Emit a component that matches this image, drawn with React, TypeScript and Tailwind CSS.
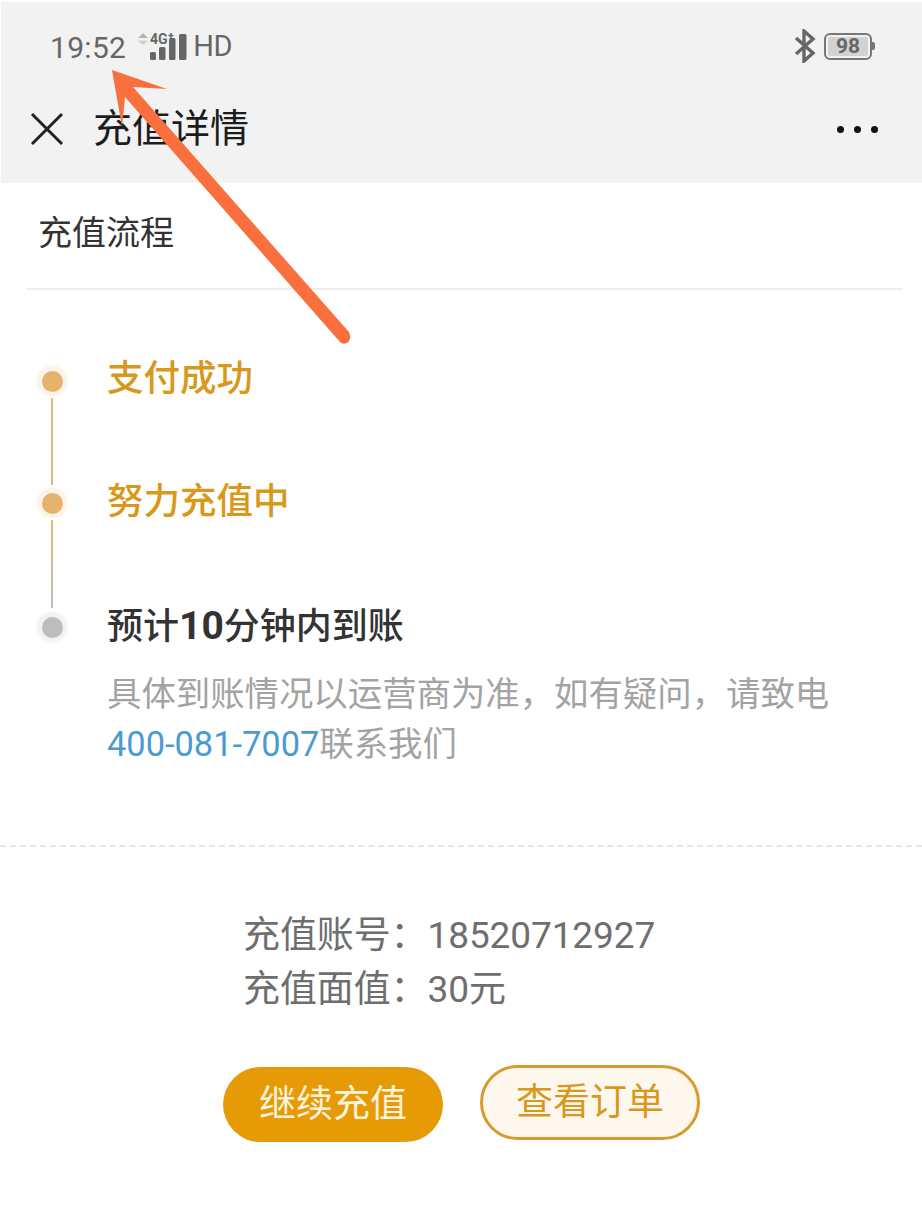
const sans = "font-['Roboto','Noto_Sans_CJK_SC',sans-serif]";

function Signal() {
  return (
    <svg width="60" height="32" viewBox="0 0 60 32" className="ml-[10px]">
      <path d="M2 7 L7 2 L12 7 Z" fill="#b4b4b4" />
      <path d="M2 9.5 L7 14 L12 9.5 Z" fill="#cfcfcf" />
      <g fill="#666">
        <rect x="14" y="21" width="6" height="8" rx="1.5" />
        <rect x="23" y="16" width="6.5" height="13" rx="1.5" />
        <rect x="33" y="7" width="6.5" height="22" rx="1.5" />
        <rect x="43" y="3" width="7.5" height="26" rx="1.5" />
      </g>
      <text x="14" y="12.5" fontSize="14" fontWeight="700" fill="#666" fontFamily="Roboto, sans-serif">4G</text>
      <path d="M35 2 v5 M32.5 4.5 h5" stroke="#666" strokeWidth="1.6" />
    </svg>
  );
}

export default function App() {
  return (
    <div className={`relative min-h-[1207px] w-[922px] overflow-hidden bg-white ${sans}`}>
      {/* header */}
      <header className="ml-px mt-[2px] h-[181px] bg-[#f2f2f2]">
        <div className="flex h-[88px] items-center justify-between pl-[49px] pr-[47px] pt-[2px]">
          <div className="flex items-center">
            <span className="text-[30px] font-normal tracking-[0.3px] text-[#666]">19:52</span>
            <Signal />
            <span className="-ml-[3px] text-[29px] font-normal tracking-[-0.5px] text-[#666]">HD</span>
          </div>
          <div className="-mt-[2px] flex items-center gap-[7px]">
            <svg width="24" height="34" viewBox="0 0 24 34" fill="none" stroke="#666" strokeWidth="3.4">
              <path d="M3 9 L20 24 L11 32 V2 L20 10 L3 25" />
            </svg>
            <div className="flex items-center">
              <div className="flex h-[27px] w-[48px] items-center justify-center rounded-[6px] border-[2.5px] border-[#777] p-[2px]">
                <div className="flex h-full w-full items-center justify-center rounded-[2px] bg-[#d2d2d2] text-[21px] font-bold leading-none text-[#666]">
                  98
                </div>
              </div>
              <div className="h-[8px] w-[3px] rounded-r-[2px] bg-[#777]" />
            </div>
          </div>
        </div>
        <div className="flex h-[78px] items-center justify-between pl-[29px] pr-[44px]">
          <div className="flex items-center gap-[29px]">
            <svg width="34" height="34" viewBox="0 0 34 34" stroke="#222" strokeWidth="3">
              <path d="M2 2 L32 32 M32 2 L2 32" />
            </svg>
            <h1 className="text-[39px] font-normal leading-none text-[#1c1c1c]">充值详情</h1>
          </div>
          <div className="flex items-center gap-[10px]">
            <span className="h-[7px] w-[7px] rounded-full bg-[#111]" />
            <span className="h-[7px] w-[7px] rounded-full bg-[#111]" />
            <span className="h-[7px] w-[7px] rounded-full bg-[#111]" />
          </div>
        </div>
      </header>

      {/* section title */}
      <div className="ml-[27px] mr-[19px] flex h-[107px] items-center border-b-2 border-[#eeeeee] pb-[6px] pl-[11px]">
        <h2 className="text-[34px] font-normal leading-none text-[#333]">充值流程</h2>
      </div>

      {/* steps */}
      <div className="pl-[37px] pr-[20px] pt-[76px]">
        <div className="flex h-[122px] gap-[40px]">
          <div className="flex w-[30px] flex-col items-center">
            <div className="flex h-[30px] w-[30px] shrink-0 items-center justify-center rounded-full bg-[#fcf4e9] shadow-[0_0_5px_#fcf4e9]">
              <div className="h-[21px] w-[21px] rounded-full bg-[#e7b36c]" />
            </div>
            <div className="mt-[2px] h-[87px] w-[2px] bg-[#d8bc78]" />
          </div>
          <p className="-mt-[7px] text-[36.5px] font-medium leading-[40px] text-[#d8981c]">支付成功</p>
        </div>
        <div className="flex h-[124px] gap-[40px]">
          <div className="flex w-[30px] flex-col items-center">
            <div className="flex h-[30px] w-[30px] shrink-0 items-center justify-center rounded-full bg-[#fcf4e9] shadow-[0_0_5px_#fcf4e9]">
              <div className="h-[21px] w-[21px] rounded-full bg-[#e7b36c]" />
            </div>
            <div className="mt-[2px] h-[88px] w-[2px] bg-gradient-to-b from-[#dcbc6c] to-[#bdbdbd]" />
          </div>
          <p className="-mt-[6px] text-[36.5px] font-medium leading-[40px] text-[#d8981c]">努力充值中</p>
        </div>
        <div className="flex gap-[40px]">
          <div className="flex h-[30px] w-[30px] shrink-0 items-center justify-center rounded-full bg-[#f3f3f3] shadow-[0_0_5px_#f3f3f3]">
            <div className="h-[21px] w-[21px] rounded-full bg-[#bdbdbd]" />
          </div>
          <div className="-mt-[6px]">
            <p className="text-[36px] font-medium leading-[40px] text-[#333]">
              预计<span className="text-[39px] font-bold">10</span>分钟内到账
            </p>
            <p className="mt-[22px] text-[34.4px] leading-[50px] text-[#a3a3a3]">
              具体到账情况以运营商为准，如有疑问，请致电
              <br />
              <span className="text-[#4a9bd4]">400-081-7007</span>联系我们
            </p>
          </div>
        </div>
      </div>

      {/* dashed divider */}
      <div className="mt-[76px] border-t-2 border-dashed border-[#e6e6e6]" />

      {/* recharge info */}
      <div className="pl-[243px] pt-[62px] text-[37px] tracking-[-0.1px] leading-[54px] text-[#6e6e6e]">
        <p>充值账号：18520712927</p>
        <p>充值面值：30元</p>
      </div>

      {/* actions */}
      <div className="mt-[48px] flex items-start gap-[37px] pl-[223px]">
        <button className="mt-[2px] h-[75px] w-[220px] rounded-full bg-[#e69a06] text-[37px] text-[#fdf3dc]">继续充值</button>
        <button className="h-[75px] w-[220px] rounded-full border-[3px] border-[#d89a2c] bg-[#fdf7ee] text-[37px] text-[#d8981c]">查看订单</button>
      </div>

      {/* annotation arrow */}
      <svg className="pointer-events-none absolute left-0 top-0" width="922" height="400" viewBox="0 0 922 400">
        <path d="M112 70 L167 89 L133 87 L349 332 Q352 340 347 343 Q343 345 340 342 L125 97 L122 127 Z" fill="#f9703e" />
      </svg>
    </div>
  );
}
